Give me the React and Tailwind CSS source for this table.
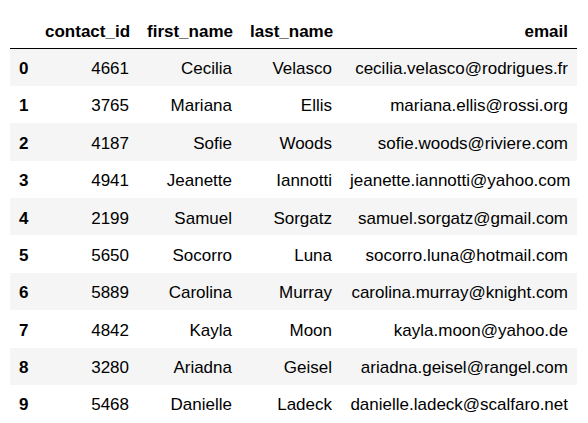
const rows = [
  ["0", "4661", "Cecilia", "Velasco", "cecilia.velasco@rodrigues.fr"],
  ["1", "3765", "Mariana", "Ellis", "mariana.ellis@rossi.org"],
  ["2", "4187", "Sofie", "Woods", "sofie.woods@riviere.com"],
  ["3", "4941", "Jeanette", "Iannotti", "jeanette.iannotti@yahoo.com"],
  ["4", "2199", "Samuel", "Sorgatz", "samuel.sorgatz@gmail.com"],
  ["5", "5650", "Socorro", "Luna", "socorro.luna@hotmail.com"],
  ["6", "5889", "Carolina", "Murray", "carolina.murray@knight.com"],
  ["7", "4842", "Kayla", "Moon", "kayla.moon@yahoo.de"],
  ["8", "3280", "Ariadna", "Geisel", "ariadna.geisel@rangel.com"],
  ["9", "5468", "Danielle", "Ladeck", "danielle.ladeck@scalfaro.net"],
];

export default function App() {
  return (
    <div className="w-[588px] h-[423px] overflow-hidden bg-white pt-[11px] pl-[10px] text-[17px] text-black" style={{ fontFamily: '"Liberation Sans", Arial, sans-serif' }}>
      <div className="w-[567px]">
        <div className="flex h-[37.5px] items-center pt-[4px] border-b-[1.5px] border-black font-bold">
          <div className="w-[26px]"></div>
          <div className="w-[102px] px-[9px] text-right">contact_id</div>
          <div className="w-[103px] px-[9px] text-right">first_name</div>
          <div className="w-[100px] px-[9px] text-right">last_name</div>
          <div className="w-[236px] px-[9px] text-right">email</div>
        </div>
        {rows.map((r, i) => (
          <div key={r[0]} className={`flex h-[37.4px] items-center pt-[3px] ${i % 2 === 0 ? "bg-[#f5f5f5]" : "bg-white"}`}>
            <div className="w-[26px] pl-[9px] font-bold">{r[0]}</div>
            <div className="w-[102px] px-[9px] text-right">{r[1]}</div>
            <div className="w-[103px] px-[9px] text-right">{r[2]}</div>
            <div className="w-[100px] px-[9px] text-right">{r[3]}</div>
            <div className="w-[236px] px-[9px] text-right whitespace-nowrap">{r[4]}</div>
          </div>
        ))}
      </div>
    </div>
  );
}
